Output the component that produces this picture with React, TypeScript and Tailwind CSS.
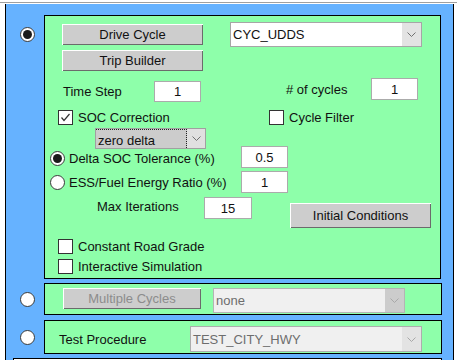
import React from 'react';

function Radio({ checked }: { checked?: boolean }) {
  return (
    <div className="flex h-[15px] w-[15px] shrink-0 items-center justify-center rounded-full border border-[#3a3a3a] bg-white">
      {checked && <div className="h-[9px] w-[9px] rounded-full bg-[#1a1a1a]" />}
    </div>
  );
}

function Checkbox({ checked }: { checked?: boolean }) {
  return (
    <div className="flex h-[15px] w-[15px] shrink-0 items-center justify-center border border-[#333] bg-white">
      {checked && (
        <svg width="13" height="13" viewBox="0 0 13 13">
          <polyline points="2.5,6.5 5,9.5 10.5,3" fill="none" stroke="#333" strokeWidth="1.2" />
        </svg>
      )}
    </div>
  );
}

function Chevron({ color = '#707070' }: { color?: string }) {
  return (
    <svg width="9" height="5" viewBox="0 0 9 5">
      <polyline points="0.5,0.5 4.5,4.5 8.5,0.5" fill="none" stroke={color} strokeWidth="1" />
    </svg>
  );
}

function Button({ children, className = '', disabled }: { children: React.ReactNode; className?: string; disabled?: boolean }) {
  return (
    <div
      className={`flex shrink-0 items-center justify-center bg-[#cdcdcd] shadow-[inset_1px_1px_0_#fff,inset_-1px_-1px_0_#6b6b6b] ${
        disabled ? 'text-[#8c8c8c]' : 'text-[#111]'
      } ${className}`}
    >
      {children}
    </div>
  );
}

function Field({ value, className = '' }: { value: string; className?: string }) {
  return (
    <div className={`flex shrink-0 items-center justify-center border border-[#ababab] bg-white text-[#111] ${className}`}>
      {value}
    </div>
  );
}

export default function App() {
  return (
    <div className="h-[360px] w-[457px] overflow-hidden bg-white font-['Liberation_Sans',Arial,sans-serif] text-[13px] leading-[15px] text-[#111]">
      <div className="h-[2px]" />
      <div className="h-px bg-[#a0a0a0]" />
      <div className="h-px" />
      <div className="ml-[5px] h-[400px] w-[449px] border-x border-black bg-[#66b2ff] pt-[11px]">
        {/* drive cycle section */}
        <div className="flex items-start">
          <div className="w-[38px] shrink-0 pl-[14px] pt-[12px]">
            <Radio checked />
          </div>
          <div className="h-[264px] w-[397px] shrink-0 border border-black bg-[#8effaa] pt-[6px]">
            <div className="flex h-[25px] items-start">
              <Button className="ml-[17px] mt-[2px] h-[21px] w-[141px]">Drive Cycle</Button>
              <div className="ml-[27px] flex h-[25px] w-[192px] border border-[#a6a6a6] bg-white">
                <div className="flex flex-1 items-center pl-[2px]">CYC_UDDS</div>
                <div className="flex w-[19px] items-center justify-center bg-[#e3e3e3]">
                  <Chevron />
                </div>
              </div>
            </div>
            <div className="mt-[3px] flex h-[21px]">
              <Button className="ml-[17px] h-[21px] w-[141px]">Trip Builder</Button>
            </div>
            <div className="mt-[7px] flex h-[24px] items-start">
              <div className="ml-[18px] mt-[3px] flex h-[21px] items-center">
                <span className="w-[91px]">Time Step</span>
                <Field value="1" className="h-[21px] w-[47px]" />
              </div>
              <div className="ml-[85px] flex h-[22px] items-center">
                <span className="w-[85px]">
                  # of cycles
                </span>
                <Field value="1" className="h-[22px] w-[47px]" />
              </div>
            </div>
            <div className="mt-[8px] flex h-[15px] items-center">
              <div className="ml-[13px] flex w-[211px] items-center">
                <Checkbox checked />
                <span className="ml-[5px]">SOC Correction</span>
              </div>
              <Checkbox />
              <span className="ml-[5px]">Cycle Filter</span>
            </div>
            <div className="mt-[3px] flex h-[18px] items-start">
              <div className="ml-[50px] flex h-[21px] w-[111px] shrink-0 border border-[#a0a0a0] bg-[#cccccc]">
                <div className="flex flex-1 p-0">
                  <div className="flex flex-1 items-end border-r border-t border-dotted border-[#222] pl-[2px]">zero delta</div>
                </div>
                <div className="flex w-[18px] items-center justify-center bg-[#e0e0e0]">
                  <Chevron />
                </div>
              </div>
            </div>
            <div className="flex h-[22px] items-start">
              <div className="ml-[5px] mt-[5px] flex h-[15px] w-[191px] items-center">
                <Radio checked />
                <span className="ml-[4px]">Delta SOC Tolerance (%)</span>
              </div>
              <Field value="0.5" className="h-[22px] w-[47px]" />
            </div>
            <div className="mt-[3px] flex h-[22px] items-start">
              <div className="ml-[5px] mt-[4px] flex h-[15px] w-[191px] items-center">
                <Radio />
                <span className="ml-[4px]">ESS/Fuel Energy Ratio (%)</span>
              </div>
              <Field value="1" className="h-[22px] w-[47px]" />
            </div>
            <div className="mt-[4px] flex h-[31px] items-start">
              <div className="ml-[52px] flex h-[18px] w-[107px] items-center">Max Iterations</div>
              <Field value="15" className="h-[22px] w-[48px]" />
              <Button className="ml-[38px] mt-[6px] h-[25px] w-[141px]">Initial Conditions</Button>
            </div>
            <div className="ml-[13px] mt-[11px] flex h-[15px] items-center">
              <Checkbox />
              <span className="ml-[5px]">Constant Road Grade</span>
            </div>
            <div className="ml-[13px] mt-[5px] flex h-[15px] items-center">
              <Checkbox />
              <span className="ml-[5px]">Interactive Simulation</span>
            </div>
          </div>
        </div>

        {/* multiple cycles */}
        <div className="mt-[4px] flex items-center">
          <div className="w-[38px] shrink-0 pl-[14px]">
            <Radio />
          </div>
          <div className="flex h-[32px] w-[398px] shrink-0 items-start border border-black bg-[#8effaa] pt-[4px]">
            <Button disabled className="ml-[18px] h-[21px] w-[138px]">Multiple Cycles</Button>
            <div className="ml-[12px] flex h-[25px] w-[192px] border border-[#b4b4b4] bg-[#f0f0f0] text-[#6d6d6d]">
              <div className="flex flex-1 items-center pl-[2px]">none</div>
              <div className="flex w-[19px] items-center justify-center bg-[#cccccc]">
                <Chevron color="#a8a8a8" />
              </div>
            </div>
          </div>
        </div>

        {/* test procedure */}
        <div className="mt-[5px] flex items-center">
          <div className="w-[38px] shrink-0 pl-[14px]">
            <Radio />
          </div>
          <div className="flex h-[34px] w-[398px] shrink-0 items-start border border-black bg-[#8effaa] pt-[5px]">
            <div className="ml-[14px] flex h-[26px] w-[131px] items-center">Test Procedure</div>
            <div className="flex h-[26px] w-[232px] border border-[#adadad] bg-[#f0f0f0] text-[#6d6d6d]">
              <div className="flex flex-1 items-center pl-[2px]">TEST_CITY_HWY</div>
              <div className="flex w-[19px] items-center justify-center bg-[#e3e3e3]">
                <Chevron color="#a8a8a8" />
              </div>
            </div>
          </div>
        </div>

        <div className="ml-[7px] mt-[4px] h-[20px] w-[429px] border border-black bg-white" />
      </div>
    </div>
  );
}
